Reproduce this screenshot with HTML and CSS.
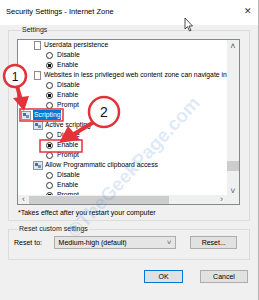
FILE: index.html
```html
<!DOCTYPE html>
<html lang="en">
<head>
    <meta charset="UTF-8">
    <title>Security Settings - Internet Zone</title>
    <link rel="stylesheet" href="styles.css">
</head>
<body>
<div class="window">
    <div class="titlebar">
        <span class="title">Security Settings - Internet Zone</span>
        <span class="close">&#x2715;</span>
    </div>

    <div class="content">
        <fieldset class="group settings">
            <legend>Settings</legend>
            <div class="listbox">
                <div class="tree-area">
                    <div class="rows">
                        <div class="row lvl1"><span class="doc"></span>Userdata persistence</div>
                        <div class="row lvl2"><span class="radio"></span>Disable</div>
                        <div class="row lvl2"><span class="radio on"></span>Enable</div>
                        <div class="row lvl1"><span class="doc"></span>Websites in less privileged web content zone can navigate in</div>
                        <div class="row lvl2"><span class="radio"></span>Disable</div>
                        <div class="row lvl2"><span class="radio on"></span>Enable</div>
                        <div class="row lvl2"><span class="radio"></span>Prompt</div>
                        <div class="row lvl0">
                            <svg class="gear" width="10" height="9" viewBox="0 0 10 9">
                                <rect x="0.5" y="0.5" width="9" height="8" fill="#dfe6ee" stroke="#8a97a8"/>
                                <rect x="2" y="2" width="3" height="3" fill="#4a6fa5"/>
                                <rect x="5" y="4" width="3" height="3" fill="#7a8fb0"/>
                            </svg>
                            <span class="selected">Scripting</span>
                        </div>
                        <div class="row lvl1b">
                            <svg class="gear" width="10" height="9" viewBox="0 0 10 9">
                                <rect x="0.5" y="0.5" width="9" height="8" fill="#dfe6ee" stroke="#8a97a8"/>
                                <rect x="2" y="2" width="3" height="3" fill="#4a6fa5"/>
                                <rect x="5" y="4" width="3" height="3" fill="#7a8fb0"/>
                            </svg>Active scripting
                        </div>
                        <div class="row lvl2"><span class="radio"></span>Disable</div>
                        <div class="row lvl2"><span class="radio on"></span>Enable</div>
                        <div class="row lvl2"><span class="radio"></span>Prompt</div>
                        <div class="row lvl1b">
                            <svg class="gear" width="10" height="9" viewBox="0 0 10 9">
                                <rect x="0.5" y="0.5" width="9" height="8" fill="#dfe6ee" stroke="#8a97a8"/>
                                <rect x="2" y="2" width="3" height="3" fill="#4a6fa5"/>
                                <rect x="5" y="4" width="3" height="3" fill="#7a8fb0"/>
                            </svg>Allow Programmatic clipboard access
                        </div>
                        <div class="row lvl2"><span class="radio"></span>Disable</div>
                        <div class="row lvl2"><span class="radio"></span>Enable</div>
                        <div class="row lvl2"><span class="radio on"></span>Prompt</div>
                    </div>
                    <div class="vscroll">
                        <span class="arrow">&#x2c4;</span>
                        <span class="vtrack"><span class="vthumb"></span></span>
                        <span class="arrow">&#x2c5;</span>
                    </div>
                </div>
                <div class="hscroll">
                    <span class="arrow">&lsaquo;</span>
                    <span class="htrack"><span class="hthumb"></span></span>
                    <span class="arrow">&rsaquo;</span>
                    <span class="corner"></span>
                </div>
            </div>
            <p class="note">*Takes effect after you restart your computer</p>
        </fieldset>

        <fieldset class="group reset">
            <legend>Reset custom settings</legend>
            <div class="reset-row">
                <span class="reset-label">Reset to:</span>
                <div class="select">Medium-high (default)<span class="chev">&#x2c5;</span></div>
                <button class="btn reset-btn">Reset...</button>
            </div>
        </fieldset>

        <div class="actions">
            <button class="btn ok">OK</button>
            <button class="btn cancel">Cancel</button>
        </div>
    </div>

    <!-- tutorial markup drawn on top of the dialog -->
    <div class="watermark">&copy;TheGeekPage.com</div>
    <svg class="marks" width="259" height="300" viewBox="0 0 259 300">
        <rect x="20" y="109" width="43" height="12" fill="none" stroke="#e2333a" stroke-width="1.5"/>
        <rect x="40" y="140" width="42" height="12" fill="none" stroke="#e2333a" stroke-width="1.5"/>
        <line x1="17" y1="86" x2="21" y2="100" stroke="#e2333a" stroke-width="4"/>
        <polygon points="13,98 29,96 24,111" fill="#e2333a"/>
        <line x1="94" y1="122" x2="74" y2="134" stroke="#e2333a" stroke-width="4"/>
        <polygon points="68,126 80,140 59,143" fill="#e2333a"/>
        <circle cx="15" cy="76" r="11" fill="#fff" stroke="#e2333a" stroke-width="2.5"/>
        <circle cx="104" cy="112" r="15" fill="#fff" stroke="#e2333a" stroke-width="2.5"/>
        <text x="15" y="80.5" class="num">1</text>
        <text x="104" y="117" class="num big">2</text>
        <path d="M185 18 L185 29 L187.5 26.5 L189.5 31 L191 30.3 L189 26 L192.5 26 Z" fill="#fff" stroke="#222" stroke-width="0.8"/>
    </svg>
</div>
</body>
</html>
```

FILE: styles.css
```css
* {
    box-sizing: border-box;
}

body {
    margin: 0;
    font-family: "Liberation Sans", Arial, sans-serif;
    font-size: 7px;
    color: #000;
    background: #fff;
}

.window {
    position: relative;
    width: 259px;
    height: 300px;
    background: #f0f0f0;
    border-right: 1px solid #b5b5b5;
    overflow: hidden;
}

/* title bar */
.titlebar {
    height: 25px;
    background: #fff;
    display: flex;
    align-items: center;
    justify-content: space-between;
    padding: 0 6px 3px 6px;
}

.title {
    font-size: 7.5px;
}

.close {
    font-size: 9px;
    color: #333;
}

.content {
    padding: 0 8px;
}

/* group boxes */
.group {
    margin: 0;
    border: 1px solid #dcdcdc;
    min-width: 0;
}

.group legend {
    padding: 0 1px;
    margin-left: 4px;
    line-height: 10px;
    color: #1a1a1a;
}

.settings {
    padding: 4px 9px 2px 8px;
}

.listbox {
    height: 166px;
    border: 1px solid #828790;
    background: #fff;
    display: flex;
    flex-direction: column;
}

.tree-area {
    flex: 1;
    display: flex;
    min-height: 0;
}

.rows {
    flex: 1;
    overflow: hidden;
    font-size: 6.8px;
}

.row {
    height: 10px;
    line-height: 10px;
    display: flex;
    align-items: center;
    white-space: nowrap;
}

.lvl0 {
    padding-left: 3px;
}

.lvl1 {
    padding-left: 16px;
}

.lvl1b {
    padding-left: 15px;
}

.lvl2 {
    padding-left: 28px;
}

.doc {
    flex: none;
    width: 7px;
    height: 9px;
    border: 1px solid #8c8c8c;
    background: linear-gradient(225deg, #f0f0f0 2px, #fff 2px);
    margin-right: 3px;
}

.gear {
    margin-right: 2px;
    flex: none;
}

.selected {
    background: #0078d7;
    color: #fff;
    padding: 0 1px;
}

.radio {
    flex: none;
    width: 7px;
    height: 7px;
    border: 1px solid #333;
    border-radius: 50%;
    margin-right: 4px;
    background: #fff;
}

.radio.on {
    background: radial-gradient(circle, #111 1.6px, #fff 2px);
}

/* scroll bars */
.vscroll {
    flex: none;
    width: 12px;
    background: #f0f0f0;
    display: flex;
    flex-direction: column;
    align-items: center;
    color: #606060;
}

.vscroll .arrow {
    height: 10px;
    line-height: 12px;
    font-size: 9px;
}

.vtrack {
    flex: 1;
    width: 100%;
    position: relative;
}

.vthumb {
    position: absolute;
    left: 0;
    right: 0;
    top: 111px;
    height: 10px;
    background: #cdcdcd;
}

.hscroll {
    height: 9px;
    display: flex;
    align-items: center;
    background: #f0f0f0;
    color: #606060;
}

.hscroll .arrow {
    width: 11px;
    text-align: center;
    font-size: 9px;
    line-height: 9px;
}

.htrack {
    flex: 1;
    height: 9px;
    display: flex;
    align-items: center;
}

.hthumb {
    width: 140px;
    height: 8px;
    background: #cdcdcd;
}

.corner {
    width: 12px;
    height: 9px;
    background: #f0f0f0;
}

.note {
    margin: 3px 0 0 1px;
    line-height: 10px;
}

.reset {
    margin-top: 3px;
    padding: 2px 12px 10px 5px;
}

.reset-row {
    display: flex;
    align-items: center;
    height: 13px;
}

.reset-label {
    width: 40px;
}

.select {
    width: 124px;
    height: 13px;
    border: 1px solid #adadad;
    background: #e5e5e5;
    padding: 0 4px;
    line-height: 11px;
    display: flex;
    justify-content: space-between;
}

.chev {
    color: #666;
    font-size: 8px;
}

.btn {
    font-family: "Liberation Sans", Arial, sans-serif;
    font-size: 7px;
    height: 13px;
    padding: 0;
    border: 1px solid #adadad;
    background: #e1e1e1;
    color: #000;
    line-height: 11px;
}

.reset-btn {
    width: 47px;
    margin-left: 14px;
}

.actions {
    display: flex;
    justify-content: flex-end;
    gap: 17px;
    margin-top: 10px;
    padding-right: 2px;
}

.ok {
    width: 39px;
    border-color: #0078d7;
}

.cancel {
    width: 48px;
}

/* overlays */
.watermark {
    position: absolute;
    left: 42px;
    top: 156px;
    width: 184px;
    text-align: center;
    font-size: 19px;
    font-weight: bold;
    color: rgba(90, 140, 215, 0.2);
    transform: rotate(-47deg);
    white-space: nowrap;
    pointer-events: none;
}

.marks {
    position: absolute;
    left: 0;
    top: 0;
    pointer-events: none;
}

.num {
    font-family: "Liberation Sans", Arial, sans-serif;
    font-size: 12px;
    text-anchor: middle;
    fill: #111;
}

.num.big {
    font-size: 14px;
}
```
